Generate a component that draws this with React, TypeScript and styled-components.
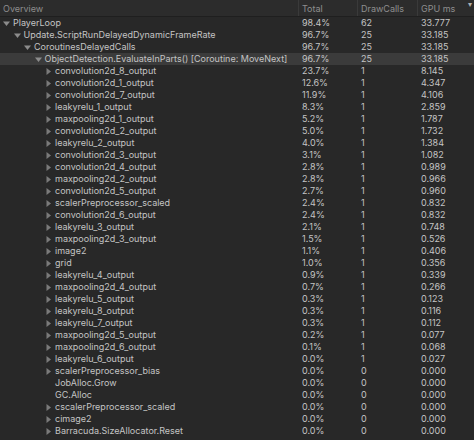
import styled, { createGlobalStyle } from "styled-components";

interface Sample {
  name: string;
  depth: number;
  total: string;
  calls: number;
  gpu: string;
  arrow?: "open" | "closed" | "none";
  selected?: boolean;
}

const samples: Sample[] = [
  { name: "PlayerLoop", depth: 0, total: "98.4%", calls: 62, gpu: "33.777", arrow: "open" },
  { name: "Update.ScriptRunDelayedDynamicFrameRate", depth: 1, total: "96.7%", calls: 25, gpu: "33.185", arrow: "open" },
  { name: "CoroutinesDelayedCalls", depth: 2, total: "96.7%", calls: 25, gpu: "33.185", arrow: "open" },
  { name: "ObjectDetection.EvaluateInParts() [Coroutine: MoveNext]", depth: 3, total: "96.7%", calls: 25, gpu: "33.185", arrow: "open", selected: true },
  { name: "convolution2d_8_output", depth: 4, total: "23.7%", calls: 1, gpu: "8.145" },
  { name: "convolution2d_1_output", depth: 4, total: "12.6%", calls: 1, gpu: "4.347" },
  { name: "convolution2d_7_output", depth: 4, total: "11.9%", calls: 1, gpu: "4.106" },
  { name: "leakyrelu_1_output", depth: 4, total: "8.3%", calls: 1, gpu: "2.859" },
  { name: "maxpooling2d_1_output", depth: 4, total: "5.2%", calls: 1, gpu: "1.787" },
  { name: "convolution2d_2_output", depth: 4, total: "5.0%", calls: 1, gpu: "1.732" },
  { name: "leakyrelu_2_output", depth: 4, total: "4.0%", calls: 1, gpu: "1.384" },
  { name: "convolution2d_3_output", depth: 4, total: "3.1%", calls: 1, gpu: "1.082" },
  { name: "convolution2d_4_output", depth: 4, total: "2.8%", calls: 1, gpu: "0.989" },
  { name: "maxpooling2d_2_output", depth: 4, total: "2.8%", calls: 1, gpu: "0.966" },
  { name: "convolution2d_5_output", depth: 4, total: "2.7%", calls: 1, gpu: "0.960" },
  { name: "scalerPreprocessor_scaled", depth: 4, total: "2.4%", calls: 1, gpu: "0.832" },
  { name: "convolution2d_6_output", depth: 4, total: "2.4%", calls: 1, gpu: "0.832" },
  { name: "leakyrelu_3_output", depth: 4, total: "2.1%", calls: 1, gpu: "0.748" },
  { name: "maxpooling2d_3_output", depth: 4, total: "1.5%", calls: 1, gpu: "0.526" },
  { name: "image2", depth: 4, total: "1.1%", calls: 1, gpu: "0.406" },
  { name: "grid", depth: 4, total: "1.0%", calls: 1, gpu: "0.356" },
  { name: "leakyrelu_4_output", depth: 4, total: "0.9%", calls: 1, gpu: "0.339" },
  { name: "maxpooling2d_4_output", depth: 4, total: "0.7%", calls: 1, gpu: "0.266" },
  { name: "leakyrelu_5_output", depth: 4, total: "0.3%", calls: 1, gpu: "0.123" },
  { name: "leakyrelu_8_output", depth: 4, total: "0.3%", calls: 1, gpu: "0.116" },
  { name: "leakyrelu_7_output", depth: 4, total: "0.3%", calls: 1, gpu: "0.112" },
  { name: "maxpooling2d_5_output", depth: 4, total: "0.2%", calls: 1, gpu: "0.077" },
  { name: "maxpooling2d_6_output", depth: 4, total: "0.1%", calls: 1, gpu: "0.068" },
  { name: "leakyrelu_6_output", depth: 4, total: "0.0%", calls: 1, gpu: "0.027" },
  { name: "scalerPreprocessor_bias", depth: 4, total: "0.0%", calls: 0, gpu: "0.000" },
  { name: "JobAlloc.Grow", depth: 4, total: "0.0%", calls: 0, gpu: "0.000", arrow: "none" },
  { name: "GC.Alloc", depth: 4, total: "0.0%", calls: 0, gpu: "0.000", arrow: "none" },
  { name: "cscalerPreprocessor_scaled", depth: 4, total: "0.0%", calls: 0, gpu: "0.000" },
  { name: "cimage2", depth: 4, total: "0.0%", calls: 0, gpu: "0.000" },
  { name: "Barracuda.SizeAllocator.Reset", depth: 4, total: "0.0%", calls: 0, gpu: "0.000" },
];

function Arrow({ kind }: { kind: "open" | "closed" | "none" }) {
  if (kind === "none") return <ArrowBox />;
  return (
    <ArrowBox>
      <svg width="7" height="7" viewBox="0 0 7 7">
        {kind === "open" ? (
          <path d="M0 1.5 H7 L3.5 6 Z" fill="#8c8c8c" />
        ) : (
          <path d="M1.5 0 V7 L6 3.5 Z" fill="#7a7a7a" />
        )}
      </svg>
    </ArrowBox>
  );
}

export default function App() {
  return (
    <>
      <GlobalStyle />
      <Panel>
        <Header>
          <HeadCell>Overview</HeadCell>
          <HeadCell $divider>Total</HeadCell>
          <HeadCell $divider>DrawCalls</HeadCell>
          <HeadCell $divider>
            GPU ms
            <Menu>▾</Menu>
          </HeadCell>
        </Header>
        {samples.map((s) => (
          <Row key={s.name} $selected={s.selected}>
            <NameCell style={{ paddingLeft: 3 + s.depth * 10.5 }}>
              <Arrow kind={s.arrow ?? "closed"} />
              <span>{s.name}</span>
            </NameCell>
            <Cell>{s.total}</Cell>
            <Cell>{s.calls}</Cell>
            <Cell>{s.gpu}</Cell>
          </Row>
        ))}
      </Panel>
    </>
  );
}

const GlobalStyle = createGlobalStyle`
  html, body {
    margin: 0;
    padding: 0;
    background: #282828;
  }
`;

const columns = "298px 59px 60px 1fr";

const Panel = styled.div`
  width: 474px;
  height: 440px;
  overflow: hidden;
  background: #282828;
  font-family: Inter, "Noto Sans", sans-serif;
  font-size: 9px;
  color: #c4c4c4;
`;

const Header = styled.div`
  display: grid;
  grid-template-columns: ${columns};
  height: 16px;
  background: #2c2c2c;
  border-bottom: 1px solid #1f1f1f;
  color: #8e8e8e;
  font-size: 9px;
`;

const HeadCell = styled.div<{ $divider?: boolean }>`
  position: relative;
  display: flex;
  align-items: center;
  padding-left: 3px;
  border-left: ${({ $divider }) => ($divider ? "1px solid #3a3a3a" : "none")};
`;

const Menu = styled.span`
  position: absolute;
  right: 2px;
  top: -1px;
  font-size: 8px;
  color: #b0b0b0;
`;

const Row = styled.div<{ $selected?: boolean }>`
  display: grid;
  grid-template-columns: ${columns};
  height: 12px;
  line-height: 12px;
  background: ${({ $selected }) => ($selected ? "#3b3b3b" : "transparent")};
`;

const NameCell = styled.div`
  display: flex;
  align-items: center;
  white-space: nowrap;
  overflow: hidden;
`;

const ArrowBox = styled.span`
  display: inline-flex;
  align-items: center;
  justify-content: center;
  width: 7px;
  height: 12px;
  margin-right: 3px;
  flex-shrink: 0;
`;

const Cell = styled.div`
  padding-left: 4px;
  white-space: nowrap;
`;
